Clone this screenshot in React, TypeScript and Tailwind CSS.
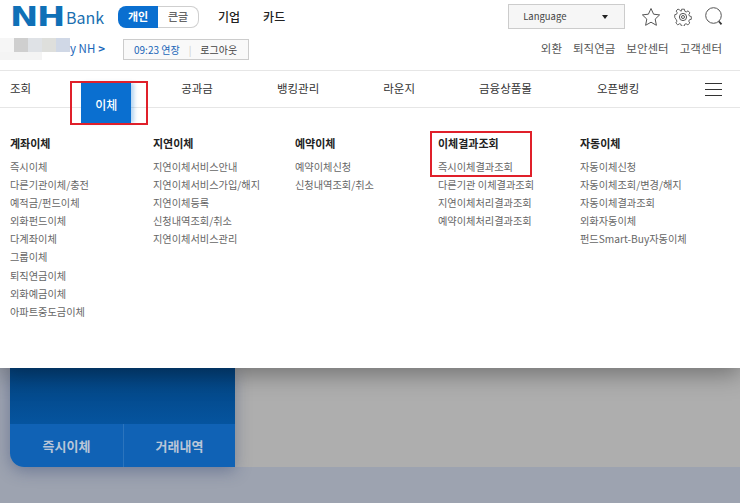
const font = { fontFamily: '"Noto Sans CJK KR", "Noto Sans", sans-serif' };

const columns = [
  {
    title: "계좌이체",
    items: ["즉시이체", "다른기관이체/충전", "예적금/펀드이체", "외화펀드이체", "다계좌이체", "그룹이체", "퇴직연금이체", "외화예금이체", "아파트중도금이체"],
  },
  {
    title: "지연이체",
    items: ["지연이체서비스안내", "지연이체서비스가입/해지", "지연이체등록", "신청내역조회/취소", "지연이체서비스관리"],
  },
  { title: "예약이체", items: ["예약이체신청", "신청내역조회/취소"] },
  {
    title: "이체결과조회",
    items: ["즉시이체결과조회", "다른기관 이체결과조회", "지연이체처리결과조회", "예약이체처리결과조회"],
  },
  {
    title: "자동이체",
    items: ["자동이체신청", "자동이체조회/변경/해지", "자동이체결과조회", "외화자동이체", "펀드Smart-Buy자동이체"],
  },
];

function TopBar() {
  return (
    <div className="flex h-[33px] items-center">
      <div className="ml-[10px] w-[56px] origin-left scale-x-[1.3] font-['DejaVu_Sans'] text-[26px] leading-none font-bold tracking-[-1px] text-[#0f70b7]">
        NH
      </div>
      <div className="w-[52px] text-[16px] leading-none text-[#1a6fb0]">Bank</div>
      <div className="flex h-[22px] w-[81px] text-[11px] font-medium">
        <div className="flex w-[40px] items-center justify-center rounded-l-lg bg-[#0a6fd0] font-bold text-white">개인</div>
        <div className="flex flex-1 items-center justify-center rounded-r-lg border border-l-0 border-[#cfcfcf] text-[#666]">큰글</div>
      </div>
      <div className="ml-[19px] text-[12px] font-medium text-[#222]">기업</div>
      <div className="ml-[23px] text-[12px] font-medium text-[#222]">카드</div>
      <div className="ml-[223px] flex h-[25px] w-[117px] items-center justify-between border border-[#cccccc] bg-[#f6f6f6] pr-[16px] pl-[14px] text-[9.500px] text-[#444]">
        <span>Language</span>
        <span className="h-0 w-0 border-x-[3px] border-t-[4px] border-x-transparent border-t-[#222]" />
      </div>
      <svg className="ml-[16px]" width="20" height="20" viewBox="0 0 20 20" fill="none" stroke="#555" strokeWidth="1">
        <path d="M10 1.5l2.6 5.7 6 .7-4.4 4.2 1.2 6.2L10 15.2l-5.4 3.1 1.2-6.2L1.400 7.900l6-.7z" strokeLinejoin="round" />
      </svg>
      <svg className="ml-[13px]" width="18" height="18" viewBox="0 0 18 18" fill="none" stroke="#555" strokeWidth="1">
        <path d="M7.500 1h3l.5 2.300 1.500.7 2-1.200 2 2.200-1.200 1.900.6 1.500 2.100.6v3l-2.100.5-.7 1.500 1.200 2-2.100 2-2-1.200-1.500.6-.5 2.100h-3l-.5-2.100-1.500-.6-2 1.200-2.100-2 1.200-2-.7-1.500L0 10V7l2.100-.6.6-1.500L1.500 3l2-2.200 2 1.200L7 3.300z" transform="scale(0.92) translate(.8 .3)" strokeLinejoin="round" />
        <circle cx="9" cy="9" r="3.600" />
        <circle cx="9" cy="9" r="1.500" />
      </svg>
      <svg className="ml-[13px]" width="18" height="19" viewBox="0 0 18 19" fill="none" stroke="#555" strokeWidth="1">
        <circle cx="8.500" cy="8.500" r="7.800" />
        <path d="M14 14.500l2.500 2.800" strokeWidth="1.800" stroke="#333" />
      </svg>
    </div>
  );
}

function UserBar() {
  return (
    <div className="flex h-[37px] items-center pb-[5px]">
      <div className="flex h-[22px] w-[70px] flex-col">
        <div className="flex h-[14px]">
          <div className="w-[14px] bg-[#f6f6f6]" />
          <div className="w-[14px] bg-[#cfcfcf]" />
          <div className="w-[14px] bg-[#dfe2e6]" />
          <div className="w-[14px] bg-[#dedfdc]" />
          <div className="w-[14px] bg-[#d0d8e6]" />
        </div>
        <div className="h-[8px] w-[42px] bg-[#f4f4f4]" />
      </div>
      <div className="flex w-[53px] items-center gap-[3px] text-[11.500px] text-[#1a66b8]">
        <span>y NH</span>
        <span className="font-bold">&gt;</span>
      </div>
      <div className="flex h-[21px] w-[126px] items-center border border-[#cccccc] bg-[#f9f9f9] pl-[10px] text-[10px] text-[#444]">
        <span className="text-[#1a66b8]">09:23 연장</span>
        <span className="mx-[9px] text-[#ccc]">|</span>
        <span>로그아웃</span>
      </div>
      <div className="mr-[18px] ml-auto flex gap-[11px] text-[11.500px] text-[#555]">
        <span>외환</span>
        <span>퇴직연금</span>
        <span>보안센터</span>
        <span>고객센터</span>
      </div>
    </div>
  );
}

function NavBar() {
  return (
    <div className="relative z-10 flex h-[38px] items-center border-y border-[#e6e6e6] text-[11.500px] text-[#333]">
      <span className="ml-[10px]">조회</span>
      <div className="relative mt-[28px] ml-[50px] flex h-[40px] w-[50px] items-center justify-center bg-[#0a6fd0] pt-[4px] text-[12px] font-medium text-white shadow-[3px_0_4px_rgba(10,111,208,0.3)]">
        이체
      </div>
      <span className="ml-[50px]">공과금</span>
      <span className="ml-[64px]">뱅킹관리</span>
      <span className="ml-[64px]">라운지</span>
      <span className="ml-[64px]">금융상품몰</span>
      <span className="ml-[65px]">오픈뱅킹</span>
      <div className="mr-[18px] ml-auto flex w-[17px] flex-col gap-[5px]">
        <div className="h-px bg-[#333]" />
        <div className="h-px bg-[#333]" />
        <div className="h-px bg-[#333]" />
      </div>
    </div>
  );
}

function MegaMenu() {
  return (
    <div className="grid h-[260px] grid-cols-[143px_142px_143px_142px_1fr] pt-[25px] pl-[10px]">
      {columns.map((col) => (
        <div key={col.title}>
          <div className="text-[11px] leading-[20px] font-bold text-[#222]">{col.title}</div>
          <ul className="mt-[5px] text-[10.200px] leading-[18.100px] text-[#666]">
            {col.items.map((item) => (
              <li key={item}>{item}</li>
            ))}
          </ul>
        </div>
      ))}
    </div>
  );
}

function Behind() {
  return (
    <div className="flex h-[135px] bg-[#9da3b0] pl-[10px]">
      <div className="z-[1] flex h-[99px] w-[225px] flex-col overflow-hidden rounded-bl-[14px] shadow-[0_4px_16px_rgba(40,60,110,0.4)]">
        <div className="h-[56px] bg-gradient-to-b from-[#03437f] to-[#05549f]" />
        <div className="flex h-[43px] bg-[#1062b5] text-[13px] font-bold text-[#b9c6d8]">
          <div className="flex w-[114px] items-center justify-center border-r border-[#2b74bd]">즉시이체</div>
          <div className="flex flex-1 items-center justify-center">거래내역</div>
        </div>
      </div>
      <div className="h-[99px] flex-1 bg-[#aeaeae]" />
    </div>
  );
}

export default function App() {
  return (
    <div className="relative h-[503px] w-[740px] overflow-hidden bg-white" style={font}>
      <div className="relative z-20 bg-white shadow-[0_6px_22px_rgba(0,0,0,0.35)]">
        <TopBar />
        <UserBar />
        <NavBar />
        <MegaMenu />
        <div className="absolute top-[81px] left-[70px] z-30 h-[44px] w-[78px] border-2 border-[#e0202a]" />
        <div className="absolute top-[131px] left-[430px] z-30 h-[46px] w-[102px] border-2 border-[#e0202a]" />
      </div>
      <Behind />
    </div>
  );
}
